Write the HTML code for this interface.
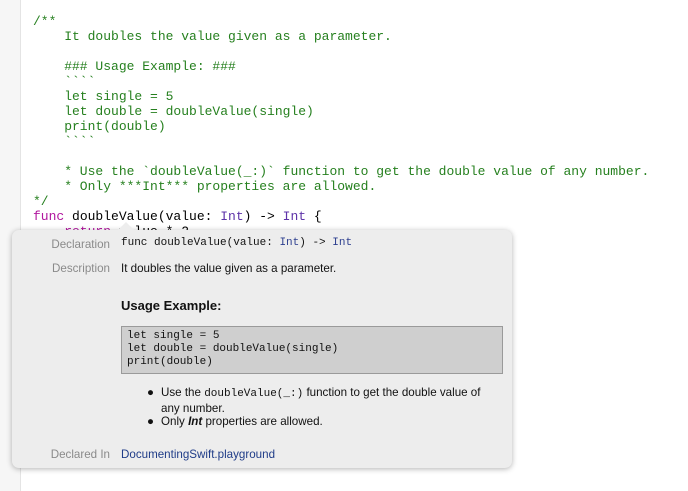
<!DOCTYPE html>
<html><head><style>
body{margin:0;width:688px;height:491px;background:#fff;position:relative;overflow:hidden;font-family:"Liberation Sans",sans-serif}
.gut{position:absolute;left:0;top:0;width:20px;height:491px;background:#f6f6f6;border-right:1px solid #e4e4e4}
.code{position:absolute;left:33px;top:14px;font-family:"Liberation Mono",monospace;font-size:13px;line-height:15px;white-space:pre;color:#26801f}
.k{color:#b1179e}.t{color:#5d32a8}.b{color:#000}
.pop{position:absolute;left:12px;top:230px;width:500px;height:238px;background:#ededed;border-radius:7px;box-shadow:0 1px 6px rgba(0,0,0,.3);font-size:11.6px;color:#111}
.arr{position:absolute;left:117px;top:222px;width:0;height:0;border-left:9px solid transparent;border-right:9px solid transparent;border-bottom:9px solid #ededed;z-index:2}
.lab{position:absolute;left:0;width:98px;text-align:right;color:#8a8a8a}
.v{position:absolute;left:109px}
.m{font-family:"Liberation Mono",monospace;font-size:11px}
pre{margin:0}
</style></head><body>
<div class="gut"></div>
<div class="code">/**
    It doubles the value given as a parameter.

    ### Usage Example: ###
    &#96;&#96;&#96;&#96;
    let single = 5
    let double = doubleValue(single)
    print(double)
    &#96;&#96;&#96;&#96;

    * Use the &#96;doubleValue(_:)&#96; function to get the double value of any number.
    * Only ***Int*** properties are allowed.
*/
<span class="k">func</span><span class="b"> doubleValue(value: </span><span class="t">Int</span><span class="b">) -&gt; </span><span class="t">Int</span><span class="b"> {</span>
<span class="k">    return</span><span class="b"> value * 2</span></div>
<div class="arr"></div>
<div class="pop">
<div class="lab" style="top:8px">Declaration</div><div class="v m" style="top:7px">func doubleValue(value: <span style="color:#2d3f8f">Int</span>) -&gt; <span style="color:#2d3f8f">Int</span></div>
<div class="lab" style="top:32px">Description</div><div class="v" style="top:32px">It doubles the value given as a parameter.</div>
<div class="v" style="top:68px;font-weight:bold;font-size:13px">Usage Example:</div>
<div class="v" style="top:96px;width:380px;height:46px;background:#cfcfcf;border:1px solid #9a9a9a"><pre class="m" style="padding:3px 5px;line-height:13px">let single = 5
let double = doubleValue(single)
print(double)</pre></div>
<div style="position:absolute;left:149px;top:156px;line-height:13.5px;width:328px">
<div style="position:relative"><span style="position:absolute;left:-14px">●</span>Use the <span class="m">doubleValue(_:)</span> function to get the double value of any number.</div>
<div style="position:relative"><span style="position:absolute;left:-14px">●</span>Only <b><i>Int</i></b> properties are allowed.</div>
</div>
<div class="lab" style="top:218px">Declared In</div><div class="v" style="top:218px;color:#1f3c88">DocumentingSwift.playground</div>
</div>
</body></html>
